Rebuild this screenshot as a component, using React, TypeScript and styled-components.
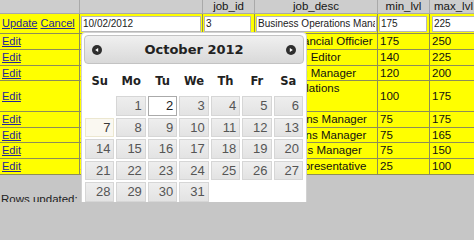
import React from "react";
import styled, { createGlobalStyle } from "styled-components";

const Global = createGlobalStyle`
  html, body {
    margin: 0;
    padding: 0;
    overflow: hidden;
    background: #c6c6c6;
  }
  body {
    font-family: "Liberation Sans", Arial, sans-serif;
  }
`;

const Page = styled.div`
  position: relative;
  width: 474px;
  height: 202px;
  overflow: hidden;
  background: #c6c6c6;
`;

const Table = styled.div`
  display: grid;
  grid-template-columns: 80px 123px 52px 123px 52px 48px;
  width: 478px;
  font-size: 11.5px;
  color: #111;
`;

const HeadCell = styled.div`
  height: 14px;
  box-sizing: border-box;
  border-right: 1px solid #a9a9a9;
  border-bottom: 1px solid #a9a9a9;
  background: #cdcdcd;
  text-align: center;
  line-height: 13px;
  white-space: nowrap;
  overflow: hidden;
  color: #151515;
`;

const Cell = styled.div<{ $pad?: number; $tall?: boolean }>`
  box-sizing: border-box;
  min-height: ${(p) => (p.$tall ? 20 : 15.75)}px;
  background: #ffff00;
  border-right: 1px solid #8e8e58;
  border-bottom: 1px solid #8e8e58;
  padding: 0 2px 0 ${(p) => (p.$pad ?? 2)}px;
  display: flex;
  align-items: center;
  line-height: 14.75px;
  overflow: hidden;
`;

const Link = styled.a`
  color: #24249a;
  text-decoration: underline;
  font-size: 11px;
  cursor: pointer;
`;

const Links = styled.span`
  display: flex;
  gap: 3px;
  white-space: nowrap;
`;

const Field = styled.input<{ $w: number }>`
  box-sizing: border-box;
  width: ${(p) => p.$w}px;
  height: 16px;
  margin: 0;
  padding: 0 1px;
  border: 1px solid #b7b7b7;
  border-radius: 0;
  background: #fff;
  font: 10px "Liberation Sans", Arial, sans-serif;
  color: #222;
  outline: none;
`;

const Status = styled.div`
  margin-top: 18px;
  padding-left: 1px;
  font-size: 11.5px;
  line-height: 13px;
  color: #222;
`;

const Picker = styled.div`
  position: absolute;
  left: 81px;
  top: 32px;
  width: 226px;
  height: 190px;
  box-sizing: border-box;
  padding: 2px 2px 0;
  background: #fff;
  border: 1px solid #d2d2d2;
  border-radius: 4px;
  z-index: 5;
  font-family: "DejaVu Sans", Verdana, sans-serif;
`;

const PickerHeader = styled.div`
  height: 29px;
  box-sizing: border-box;
  border: 1px solid #c3c3c3;
  border-radius: 4px;
  background: linear-gradient(#f0f0f0, #d9d9d9);
  display: flex;
  align-items: center;
  justify-content: space-between;
  padding: 0 7px;
`;

const Title = styled.div`
  font-weight: bold;
  font-size: 13px;
  color: #222;
`;

const NavIcon = styled.svg`
  display: block;
  width: 10px;
  height: 10px;
`;

const DayGrid = styled.div`
  display: grid;
  grid-template-columns: repeat(7, 1fr);
`;

const WeekDay = styled.div`
  height: 31px;
  box-sizing: border-box;
  padding-top: 3px;
  display: flex;
  align-items: center;
  justify-content: center;
  font-weight: bold;
  font-size: 11.5px;
  color: #222;
`;

const DayCell = styled.div`
  padding: 1px;
`;

type DayState = "default" | "active" | "today";

const Day = styled.div<{ $state: DayState }>`
  height: 19.5px;
  box-sizing: border-box;
  padding-right: 3px;
  text-align: right;
  font: 13px/17.5px "Liberation Sans", Arial, sans-serif;
  border: 1px solid
    ${(p) =>
      p.$state === "active" ? "#aaaaaa" : p.$state === "today" ? "#ece7d0" : "#d6d6d6"};
  background: ${(p) =>
    p.$state === "active"
      ? "#ffffff"
      : p.$state === "today"
      ? "#faf8f1"
      : "linear-gradient(#eeeeee, #e3e3e3)"};
  color: ${(p) => (p.$state === "active" ? "#212121" : p.$state === "today" ? "#3a3a3a" : "#555555")};
`;

const rows = [
  { date: "10/02/2012", id: 4, desc: "Chief Financial Officier", min: 175, max: 250 },
  { date: "10/02/2012", id: 6, desc: "Managing Editor", min: 140, max: 225 },
  { date: "10/02/2012", id: 7, desc: "Marketing Manager", min: 120, max: 200 },
  { date: "10/02/2012", id: 8, desc: "Public Relations Manager", min: 100, max: 175 },
  { date: "10/02/2012", id: 9, desc: "Acquisitions Manager", min: 75, max: 175 },
  { date: "10/02/2012", id: 10, desc: "Productions Manager", min: 75, max: 165 },
  { date: "10/02/2012", id: 11, desc: "Operations Manager", min: 75, max: 150 },
  { date: "10/02/2012", id: 13, desc: "Sales Representative", min: 25, max: 100 },
];

const weekDays = ["Su", "Mo", "Tu", "We", "Th", "Fr", "Sa"];

function Arrow({ dir }: { dir: "prev" | "next" }) {
  const pts = dir === "prev" ? "3.2,5 6.2,2.9 6.2,7.1" : "6.8,5 3.8,2.9 3.8,7.1";
  return (
    <NavIcon viewBox="0 0 10 10">
      <circle cx="5" cy="5" r="5" fill="#2e2e2e" />
      <polygon points={pts} fill="#ffffff" />
    </NavIcon>
  );
}

function Calendar() {
  const cells: (number | null)[] = [null];
  for (let d = 1; d <= 31; d++) cells.push(d);
  return (
    <Picker>
      <PickerHeader>
        <Arrow dir="prev" />
        <Title>October 2012</Title>
        <Arrow dir="next" />
      </PickerHeader>
      <DayGrid>
        {weekDays.map((w) => (
          <WeekDay key={w}>{w}</WeekDay>
        ))}
        {cells.map((d, i) => (
          <DayCell key={i}>
            {d !== null && (
              <Day $state={d === 2 ? "active" : d === 7 ? "today" : "default"}>{d}</Day>
            )}
          </DayCell>
        ))}
      </DayGrid>
    </Picker>
  );
}

export default function App() {
  return (
    <Page>
      <Global />
      <Table>
        <HeadCell />
        <HeadCell />
        <HeadCell>job_id</HeadCell>
        <HeadCell>job_desc</HeadCell>
        <HeadCell>min_lvl</HeadCell>
        <HeadCell>max_lvl</HeadCell>

        <Cell $tall>
          <Links>
            <Link>Update</Link>
            <Link>Cancel</Link>
          </Links>
        </Cell>
        <Cell $tall $pad={1}>
          <Field $w={120} defaultValue="10/02/2012" />
        </Cell>
        <Cell $tall $pad={1}>
          <Field $w={47} defaultValue="3" />
        </Cell>
        <Cell $tall $pad={1}>
          <Field $w={121} defaultValue="Business Operations Manager" />
        </Cell>
        <Cell $tall $pad={1}>
          <Field $w={48} defaultValue="175" />
        </Cell>
        <Cell $tall $pad={2}>
          <Field $w={47} defaultValue="225" />
        </Cell>

        {rows.map((r) => (
          <React.Fragment key={r.id}>
            <Cell>
              <Link>Edit</Link>
            </Cell>
            <Cell $pad={0}>{r.date}</Cell>
            <Cell>{r.id}</Cell>
            <Cell>{r.desc}</Cell>
            <Cell>{r.min}</Cell>
            <Cell>{r.max}</Cell>
          </React.Fragment>
        ))}
      </Table>
      <Status>Rows updated:</Status>
      <Calendar />
    </Page>
  );
}
